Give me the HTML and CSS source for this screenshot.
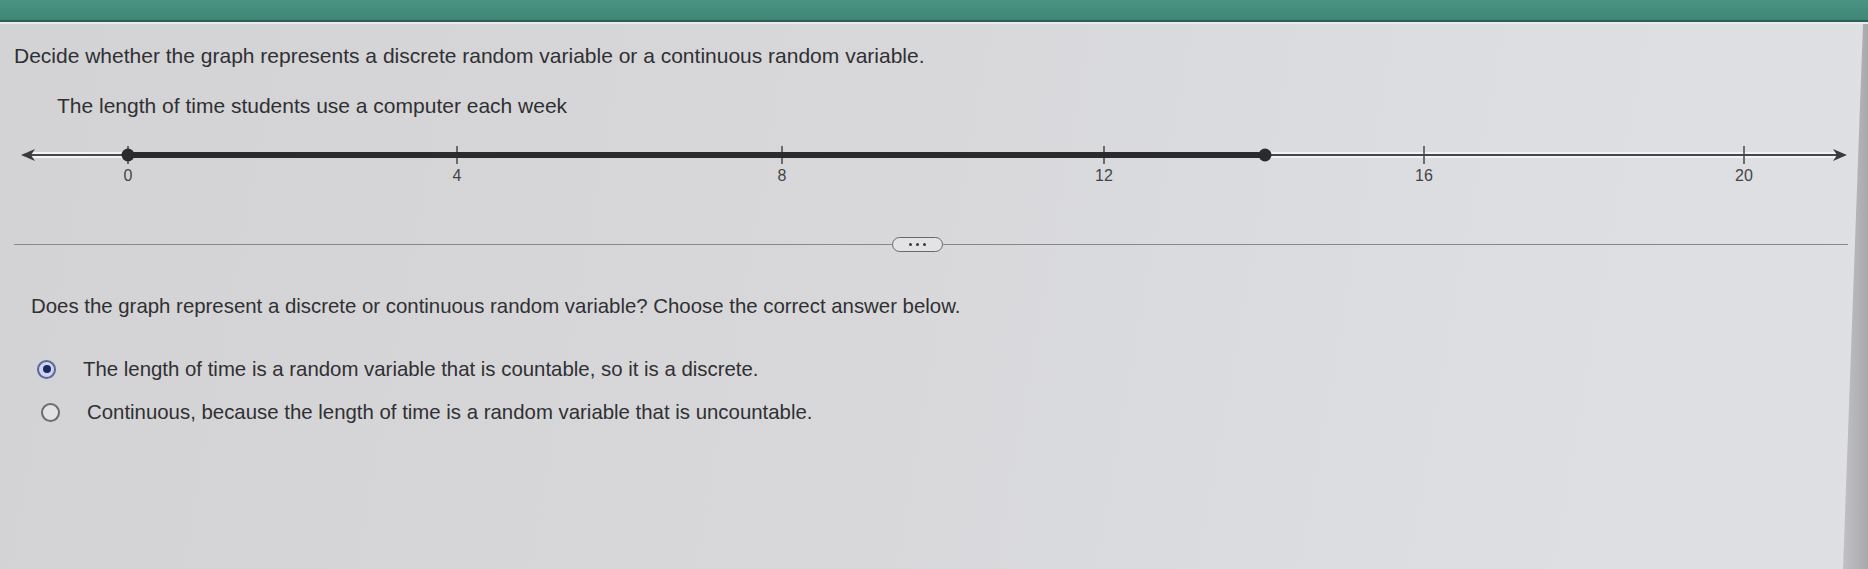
FILE: index.html
```html
<!DOCTYPE html>
<html lang="en">
<head>
<meta charset="utf-8">
<title>Discrete or continuous</title>
<link rel="stylesheet" href="styles.css">
</head>
<body>
<header class="topbar"></header>
<main class="content">
  <p class="prompt">Decide whether the graph represents a discrete random variable or a continuous random variable.</p>
  <p class="item">The length of time students use a computer each week</p>

  <div class="graph">
    <svg class="numberline" viewBox="0 0 1868 60" width="1868" height="60" aria-label="Number line from 0 to 20">
      <!-- axis -->
      <line x1="26" y1="30" x2="1842" y2="30" class="axis-halo"/>
      <line x1="26" y1="30" x2="1842" y2="30" class="axis"/>
      <polygon points="21,30 35,24 31,30 35,36" class="arrow"/>
      <polygon points="1847,30 1833,24 1837,30 1833,36" class="arrow"/>
      <!-- ticks -->
      <g class="ticks">
        <line x1="128" y1="21" x2="128" y2="39"/>
        <line x1="457" y1="21" x2="457" y2="39"/>
        <line x1="782" y1="21" x2="782" y2="39"/>
        <line x1="1104" y1="21" x2="1104" y2="39"/>
        <line x1="1424" y1="21" x2="1424" y2="39"/>
        <line x1="1744" y1="21" x2="1744" y2="39"/>
      </g>
      <!-- shaded interval [0, 14] -->
      <line x1="128" y1="30" x2="1265" y2="30" class="interval"/>
      <circle cx="128" cy="30" r="6.5" class="endpoint"/>
      <circle cx="1265" cy="30" r="6.5" class="endpoint"/>
      <g class="labels">
        <text x="128" y="56">0</text>
        <text x="457" y="56">4</text>
        <text x="782" y="56">8</text>
        <text x="1104" y="56">12</text>
        <text x="1424" y="56">16</text>
        <text x="1744" y="56">20</text>
      </g>
    </svg>
  </div>

  <div class="divider">
    <span class="rule rule-left"></span>
    <button class="more" type="button" aria-label="More"><i></i><i></i><i></i></button>
    <span class="rule rule-right"></span>
  </div>

  <p class="question">Does the graph represent a discrete or continuous random variable? Choose the correct answer below.</p>

  <ul class="choices">
    <li class="choice selected"><span class="radio"></span><span>The length of time is a random variable that is countable, so it is a discrete.</span></li>
    <li class="choice"><span class="radio"></span><span>Continuous, because the length of time is a random variable that is uncountable.</span></li>
  </ul>
</main>
<div class="bezel"></div>
</body>
</html>
```
FILE: styles.css
```css
html, body {
  margin: 0;
  padding: 0;
}

body {
  width: 1868px;
  height: 569px;
  overflow: hidden;
  position: relative;
  font-family: "Liberation Sans", Arial, sans-serif;
  color: #303033;
  background: linear-gradient(100deg, #d3d3d5 0%, #d7d7da 40%, #dcdde0 75%, #dfe0e3 100%);
}

.topbar {
  height: 20px;
  background: linear-gradient(180deg, #4a9283 0%, #3f8677 100%);
  border-bottom: 2px solid #2b5f55;
  box-shadow: 0 2px 0 #e9eaec;
}

.content {
  display: flex;
  flex-direction: column;
}

.prompt,
.item {
  font-size: 21px;
  line-height: 24px;
}

.question,
.choice {
  font-size: 20.4px;
  line-height: 24px;
}

.prompt {
  margin: 22px 0 0 14px;
}

.item {
  margin: 26px 0 0 57px;
}

.graph {
  margin-top: 7px;
  height: 60px;
}

.numberline {
  display: block;
}

.axis {
  stroke: #47474a;
  stroke-width: 2;
}

.axis-halo {
  stroke: #f2f2f4;
  stroke-width: 6;
}

.arrow {
  fill: #3a3a3d;
}

.ticks line {
  stroke: #47474a;
  stroke-width: 1.5;
}

.interval {
  stroke: #2b2b2e;
  stroke-width: 6;
}

.endpoint {
  fill: #2b2b2e;
}

.labels text {
  font-family: "Liberation Sans", Arial, sans-serif;
  font-size: 16px;
  fill: #444447;
  text-anchor: middle;
}

.divider {
  display: flex;
  align-items: center;
  margin: 52px 0 0 14px;
  width: 1834px;
  height: 14px;
}

.rule {
  height: 1px;
  background: #88888b;
}

.rule-left {
  width: 878px;
}

.rule-right {
  flex: 1;
}

.more {
  display: flex;
  align-items: center;
  justify-content: center;
  gap: 4px;
  width: 51px;
  height: 15px;
  padding: 0;
  border: 1.5px solid #68686b;
  border-radius: 8px;
  background: #e3e3e6;
}

.more i {
  width: 3px;
  height: 3px;
  border-radius: 50%;
  background: #3a3a3d;
}

.question {
  margin: 43px 0 0 31px;
}

.choices {
  list-style: none;
  margin: 39px 0 0 0;
  padding: 0 0 0 37px;
  display: flex;
  flex-direction: column;
  gap: 19px;
}

.choice {
  display: flex;
  align-items: center;
  gap: 27px;
}

.choice + .choice {
  padding-left: 4px;
}

.radio {
  box-sizing: border-box;
  flex: none;
  width: 19px;
  height: 19px;
  border-radius: 50%;
  border: 2px solid #6c6c70;
  background: #e2e2e5;
  display: flex;
  align-items: center;
  justify-content: center;
}

.selected .radio {
  border: 2px solid #59679a;
  background: #cdd5f0;
}

.selected .radio::after {
  content: "";
  width: 8px;
  height: 8px;
  border-radius: 50%;
  background: #1c2860;
}

/* monitor frame along the right edge */
.bezel {
  position: absolute;
  top: 24px;
  right: 0;
  width: 26px;
  height: 545px;
  background: linear-gradient(90deg, #c2c2c6, #a9a9ad);
  clip-path: polygon(21px 0, 26px 0, 26px 100%, 1px 100%);
}
```
